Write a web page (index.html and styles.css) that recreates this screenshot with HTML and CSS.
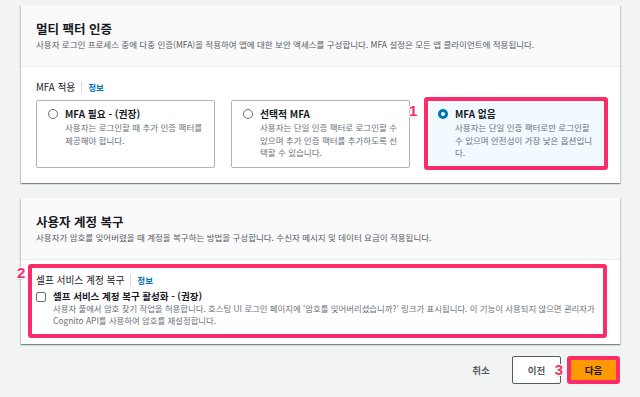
FILE: index.html
```html
<!DOCTYPE html>
<html lang="ko">
<head>
  <meta charset="UTF-8">
  <meta name="viewport" content="width=device-width, initial-scale=1.0">
  <title>멀티 팩터 인증</title>
  <link rel="stylesheet" href="styles.css">
</head>
<body>
  <div class="page">
    <section class="card">
      <div class="card-header">
        <h2>멀티 팩터 인증</h2>
        <p>사용자 로그인 프로세스 중에 다중 인증(MFA)을 적용하여 앱에 대한 보안 액세스를 구성합니다. MFA 설정은 모든 앱 클라이언트에 적용됩니다.</p>
      </div>
      <div class="card-body">
        <div class="field-label">MFA 적용<span class="info">정보</span></div>
        <div class="tiles">
          <div class="tile">
            <span class="radio"></span>
            <div class="tile-text">
              <div class="tile-title">MFA 필요 - (권장)</div>
              <div class="tile-desc">사용자는 로그인할 때 추가 인증 팩터를 제공해야 합니다.</div>
            </div>
          </div>
          <div class="tile">
            <span class="radio"></span>
            <div class="tile-text">
              <div class="tile-title">선택적 MFA</div>
              <div class="tile-desc">사용자는 단일 인증 팩터로 로그인할 수 있으며 추가 인증 팩터를 추가하도록 선택할 수 있습니다.</div>
            </div>
          </div>
          <div class="tile selected">
            <span class="radio checked"></span>
            <div class="tile-text">
              <div class="tile-title">MFA 없음</div>
              <div class="tile-desc">사용자는 단일 인증 팩터로만 로그인할 수 있으며 안전성이 가장 낮은 옵션입니다.</div>
            </div>
            <span class="mark mark-1">1</span>
          </div>
        </div>
      </div>
    </section>

    <section class="card">
      <div class="card-header">
        <h2>사용자 계정 복구</h2>
        <p>사용자가 암호를 잊어버렸을 때 계정을 복구하는 방법을 구성합니다. 수신자 메시지 및 데이터 요금이 적용됩니다.</p>
      </div>
      <div class="card-body recovery">
        <div class="field-label">셀프 서비스 계정 복구<span class="info">정보</span></div>
        <div class="check-row">
          <span class="checkbox"></span>
          <div>
            <div class="check-title">셀프 서비스 계정 복구 활성화 - (권장)</div>
            <div class="check-desc">사용자 풀에서 암호 찾기 작업을 허용합니다. 호스팅 UI 로그인 페이지에 ‘암호를 잊어버리셨습니까?’ 링크가 표시됩니다. 이 기능이 사용되지 않으면 관리자가 Cognito API를 사용하여 암호를 재설정합니다.</div>
          </div>
        </div>
        <span class="mark mark-2">2</span>
      </div>
    </section>

    <div class="actions">
      <button class="btn btn-link">취소</button>
      <button class="btn btn-normal">이전</button>
      <button class="btn btn-primary">다음</button>
      <span class="mark mark-3">3</span>
    </div>
  </div>
</body>
</html>
```

FILE: styles.css
```css
body {
  margin: 0;
  background: #f2f3f3;
  font-family: "Noto Sans CJK KR", "Noto Sans", sans-serif;
  color: #16191f;
}
.page {
  padding: 5px 20px 0 21px;
}
.card {
  background: #fff;
  box-shadow: 0 1px 1px 0 rgba(0,28,36,0.3), 1px 1px 1px 0 rgba(0,28,36,0.15), -1px 1px 1px 0 rgba(0,28,36,0.15);
  margin-bottom: 15px;
}
.card-header {
  background: #fafafa;
  border-bottom: 1px solid #eaeded;
  padding: 16px 15px 16px;
}
.card-header h2 {
  margin: 0 0 1px;
  font-size: 12.5px;
  line-height: 16px;
  font-weight: 700;
}
.card-header p {
  margin: 0;
  font-size: 8.5px;
  line-height: 12px;
  color: #545b64;
}
.card-body {
  padding: 14px 15px 15px;
}
.field-label {
  display: flex;
  align-items: center;
  font-size: 9.7px;
  line-height: 12px;
  color: #16191f;
}
.info {
  color: #0073bb;
  font-weight: 700;
  font-size: 8.5px;
  border-left: 1px solid #d5dbdb;
  margin-left: 6px;
  padding-left: 6px;
}
.tiles {
  display: flex;
  gap: 16px;
  margin-top: 7px;
}
.tile {
  position: relative;
  flex: 1 1 0;
  min-width: 0;
  height: 68px;
  box-sizing: border-box;
  border: 1px solid #aab7b8;
  border-radius: 2px;
  padding: 6px 6px 0 11px;
  display: flex;
  gap: 7px;
}
.tile.selected {
  background: #f1faff;
  border-color: #0073bb;
}
.tile.selected::after {
  content: "";
  position: absolute;
  inset: -4px -4px -3px -3px;
  border: 4px solid #fa2d6a;
  border-radius: 3px;
}
.radio {
  flex: none;
  width: 10px;
  height: 10px;
  margin-top: 2px;
  box-sizing: border-box;
  border: 1.5px solid #687078;
  border-radius: 50%;
  background: #fff;
}
.radio.checked {
  border: 3px solid #0073bb;
}
.tile-title {
  font-size: 9.8px;
  line-height: 14px;
  font-weight: 700;
}
.tile-desc {
  font-size: 8.5px;
  line-height: 12.5px;
  color: #687078;
  width: 137.5px;
}
.recovery {
  position: relative;
  padding-bottom: 18px;
}
.recovery::after {
  content: "";
  position: absolute;
  top: 4px;
  left: 7px;
  right: 13px;
  bottom: 6px;
  border: 4px solid #fa2d6a;
  border-radius: 3px;
}
.check-row {
  display: flex;
  gap: 7px;
  margin-top: 3px;
}
.checkbox {
  flex: none;
  width: 10px;
  height: 10px;
  margin-top: 3px;
  box-sizing: border-box;
  border: 1.5px solid #687078;
  border-radius: 2px;
  background: #fff;
}
.check-title {
  font-size: 9.5px;
  line-height: 14px;
  font-weight: 700;
}
.check-desc {
  font-size: 8.4px;
  line-height: 11.5px;
  color: #687078;
}
.actions {
  position: relative;
  display: flex;
  justify-content: flex-end;
  align-items: center;
  gap: 6px;
  margin-top: -3px;
}
.btn {
  font-family: inherit;
  font-size: 9.5px;
  font-weight: 700;
  height: 28px;
  border-radius: 2px;
  padding: 0;
  cursor: pointer;
}
.btn-link {
  width: 40px;
  background: none;
  border: 1px solid transparent;
  color: #545b64;
  margin-right: 5px;
}
.btn-normal {
  width: 49px;
  background: #fff;
  border: 1px solid #545b64;
  color: #545b64;
}
.btn-primary {
  width: 53px;
  background: #ff9900;
  border: 4px solid #fa2d6a;
  border-radius: 3px;
  color: #16191f;
}
.mark {
  position: absolute;
  font-family: "Liberation Sans", Arial, sans-serif;
  font-weight: 700;
  font-size: 15px;
  line-height: 15px;
  color: #fa2d6a;
  text-shadow: -1px -1px 0 #fff, 1px -1px 0 #fff, -1px 1px 0 #fff, 1px 1px 0 #fff, 0 1px 2px rgba(0,0,0,0.35);
}
.mark-1 {
  left: -18px;
  top: 2px;
}
.mark-2 {
  left: -4px;
  top: 5px;
}
.mark-3 {
  right: 57px;
  top: 6px;
}
```
